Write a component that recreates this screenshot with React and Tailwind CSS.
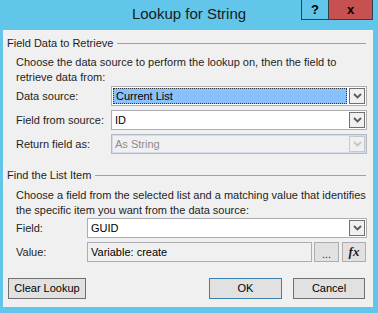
import React from "react";

const Chevron = ({ color = "#555" }) => (
  <svg width="9" height="6" viewBox="0 0 9 6">
    <polyline points="1,1 4.5,4.5 8,1" fill="none" stroke={color} strokeWidth="1.8" />
  </svg>
);

const DropBtn = ({ disabled }) => (
  <div
    className={
      "w-[16px] h-[16px] flex items-center justify-center border " +
      (disabled ? "border-[#c8c8c8] bg-[#f0f0f0]" : "border-[#707070] bg-[#f0f0f0]")
    }
  >
    <Chevron color={disabled ? "#c4c4c4" : "#5a5a5a"} />
  </div>
);

export default function App() {
  return (
    <div className="w-[378px] h-[313px] bg-[#62c6ea] flex flex-col overflow-hidden font-['Liberation_Sans',Arial,sans-serif] text-[#1e1e1e]">
      {/* title bar */}
      <div className="relative h-[30px] shrink-0 flex items-start justify-center">
        <div className="text-[15px] leading-[28px] text-[#1a1a1a] mt-[0px]">Lookup for String</div>
        <div className="absolute right-[5px] top-0 flex h-[20px] border-l border-b border-r border-[#2f3f4a]">
          <div className="w-[27px] flex items-center justify-center text-[13px] font-bold text-black border-r border-[#2f3f4a]">?</div>
          <div className="w-[43px] bg-[#c75050] flex items-center justify-center text-[13px] font-bold text-black">x</div>
        </div>
      </div>

      {/* client */}
      <div className="ml-[3px] mr-[5px] h-[277px] bg-[#f0f0f0] flex flex-col pt-[6px] text-[11px]">
        {/* Section 1 header */}
        <div className="flex items-center h-[15px] pl-[4px] pr-[7px]">
          <span className="leading-[15px]">Field Data to Retrieve</span>
          <div className="flex-1 h-px bg-[#a0a0a0] ml-[4px]" />
        </div>
        <div className="pl-[13px] mt-[4px] leading-[15px]">
          <div>Choose the data source to perform the lookup on, then the field to</div>
          <div>retrieve data from:</div>
        </div>
        <div className="flex flex-col gap-[4px] mt-[1px] pl-[13px] pr-[6px]">
          <div className="flex items-center h-[20px]">
            <div className="w-[95px]">Data source:</div>
            <div className="flex-1 h-[20px] border border-[#abadb3] bg-white flex items-center pr-[1px]">
              <div className="flex-1 h-[16px] ml-[1px] mr-[2px] bg-[#89c1fe] border border-dotted border-[#333] flex items-center pl-[2px] text-black">
                Current List
              </div>
              <DropBtn />
            </div>
          </div>
          <div className="flex items-center h-[20px]">
            <div className="w-[95px]">Field from source:</div>
            <div className="flex-1 h-[20px] border border-[#abadb3] bg-white flex items-center pr-[1px]">
              <div className="flex-1 pl-[3px] text-black">ID</div>
              <DropBtn />
            </div>
          </div>
          <div className="flex items-center h-[20px]">
            <div className="w-[95px]">Return field as:</div>
            <div className="flex-1 h-[20px] border border-[#aebccb] shadow-[inset_0_0_0_1px_#d3dce6] bg-[#f0f0f0] flex items-center pr-[1px]">
              <div className="flex-1 pl-[3px] text-[#8c8c8c]">As String</div>
              <DropBtn disabled />
            </div>
          </div>
        </div>

        {/* Section 2 header */}
        <div className="flex items-center h-[15px] pl-[4px] pr-[7px] mt-[14px]">
          <span className="leading-[15px]">Find the List Item</span>
          <div className="flex-1 h-px bg-[#a0a0a0] ml-[4px]" />
        </div>
        <div className="pl-[13px] mt-[5px] leading-[15px]">
          <div>Choose a field from the selected list and a matching value that identifies</div>
          <div>the specific item you want from the data source:</div>
        </div>
        <div className="flex flex-col gap-[4px] pl-[13px] pr-[6px]">
          <div className="flex items-center h-[20px]">
            <div className="w-[71px]">Field:</div>
            <div className="flex-1 h-[20px] border border-[#abadb3] bg-white flex items-center pr-[1px]">
              <div className="flex-1 pl-[3px] text-black">GUID</div>
              <DropBtn />
            </div>
          </div>
          <div className="flex items-center h-[20px]">
            <div className="w-[71px]">Value:</div>
            <div className="flex-1 h-[20px] border border-[#abadb3] bg-[#f0f0f0] flex items-center pl-[3px] text-black">
              Variable: create
            </div>
            <div className="w-[25px] h-[20px] ml-[2px] border border-[#adadad] bg-[#e1e1e1] flex items-center justify-center text-[11px] leading-none pt-[4px]">
              ...
            </div>
            <div className="w-[24px] h-[20px] ml-[3px] mr-[1px] border border-[#adadad] bg-[#e1e1e1] flex items-center justify-center font-['Liberation_Serif',serif] italic font-bold text-[13px]">
              fx
            </div>
          </div>
        </div>

        {/* buttons */}
        <div className="flex items-center mt-[16px] pl-[5px] pr-[8px]">
          <div className="w-[78px] h-[21px] border border-[#707070] bg-[#e1e1e1] flex items-center justify-center text-black">
            Clear Lookup
          </div>
          <div className="flex-1" />
          <div className="w-[73px] h-[21px] border border-[#3c7fb1] bg-[#e1e1e1] flex items-center justify-center text-black">
            OK
          </div>
          <div className="w-[72px] h-[21px] ml-[11px] border border-[#707070] bg-[#e1e1e1] flex items-center justify-center text-black">
            Cancel
          </div>
        </div>
      </div>
    </div>
  );
}
